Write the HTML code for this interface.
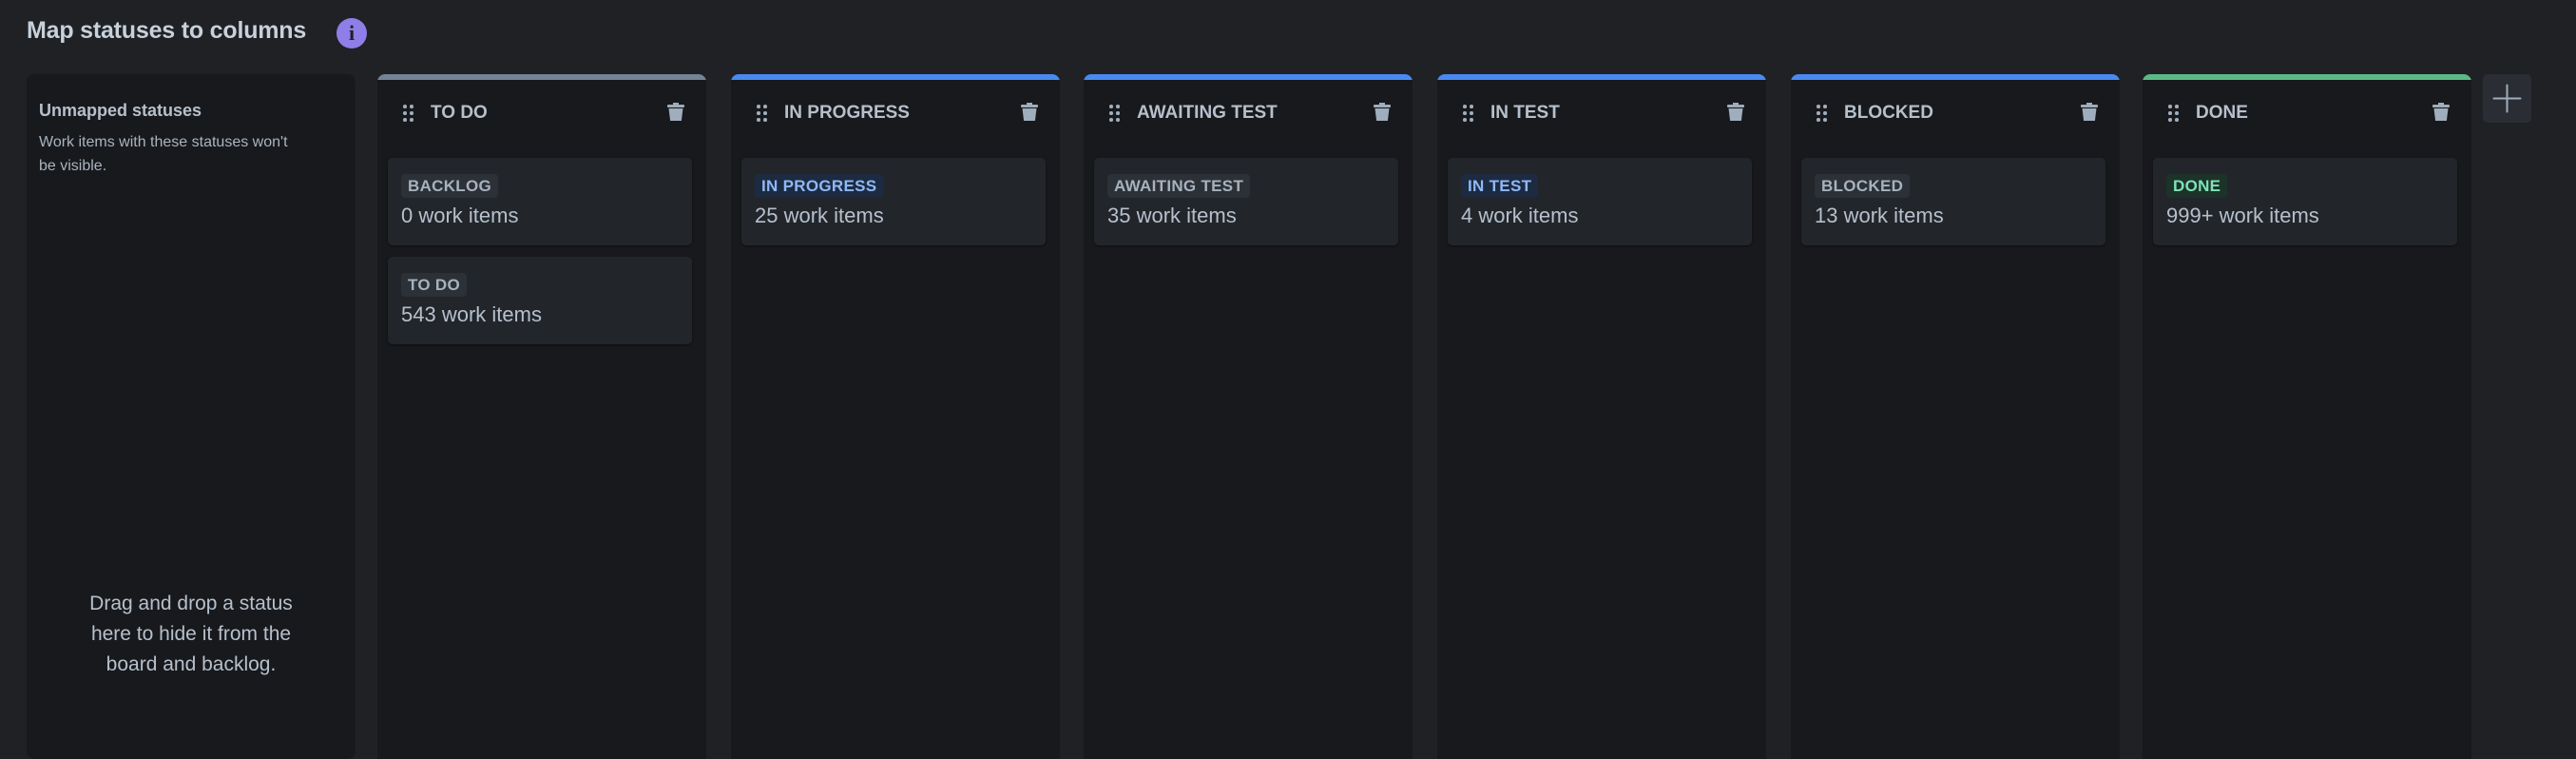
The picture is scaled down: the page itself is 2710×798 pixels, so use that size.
<!DOCTYPE html>
<html><head><meta charset="utf-8"><style>
*{box-sizing:border-box;margin:0;padding:0}
body{width:2710px;height:782px;background:#1f2125;font-family:"Liberation Sans",sans-serif;color:#b6c0cc;position:relative;overflow:hidden}
.title{position:absolute;left:28px;top:18px;font-size:25px;font-weight:bold;color:#c7d1db;letter-spacing:-0.2px}
.info{position:absolute;left:354px;top:19px;width:32px;height:32px;border-radius:50%;background:#8f7ee7;color:#1f2125;font-weight:bold;font-size:22px;text-align:center;line-height:32px;font-family:"Liberation Serif",serif}
.panel{position:absolute;left:28px;top:78px;width:346px;height:720px;background:#18191c;border-radius:8px}
.panel h3{position:absolute;left:13px;top:28px;font-size:18px;font-weight:bold;color:#b6c0cc}
.panel p.s{position:absolute;left:13px;top:59px;width:335px;font-size:16px;line-height:25px;color:#a9b4c0}
.panel p.d{position:absolute;left:0;width:346px;top:541px;text-align:center;font-size:21px;line-height:32px;color:#b6c0cc;padding:0 50px}
.col{position:absolute;top:78px;width:346px;height:720px;background:#18191c;border-radius:8px 8px 0 0;overflow:hidden}
.bar{position:absolute;left:0;top:0;width:100%;height:6px}
.hd{position:absolute;left:0;top:28px;width:100%;height:24px}
.grip{position:absolute;left:27px;top:4px;width:12px;height:18px}
.grip i{position:absolute;width:3.5px;height:3.5px;border-radius:50%;background:#9fadbc}
.hd b{position:absolute;left:56px;top:2px;font-size:19px;color:#b6c0cc}
.trash{position:absolute;left:305px;top:2px}
.card{position:absolute;left:11px;width:320px;height:92px;background:#22262b;border-radius:5px;box-shadow:0 1px 2px rgba(0,0,0,.5)}
.loz{position:absolute;left:14px;top:17px;height:25px;padding:0 7px;border-radius:4px;font-size:17px;font-weight:bold;line-height:25px;background:#2c3138;color:#a7b2be;letter-spacing:.3px}
.cnt{position:absolute;left:14px;top:48px;font-size:22px;color:#b6c0cc}
.blue{background:#1c2b41;color:#8fb8f6}
.green{background:#1c3329;color:#7ee2b8}
.plus{position:absolute;left:2612px;top:78px;width:51px;height:51px;background:#2a2e34;border-radius:5px}
</style></head><body>
<div class="title">Map statuses to columns</div>
<div class="info">i</div>
<div class="panel"><h3>Unmapped statuses</h3><p class="s">Work items with these statuses won't<br>be visible.</p><p class="d">Drag and drop a status here to hide it from the board and backlog.</p></div>

<div class="col" style="left:397px"><div class="bar" style="background:#738496"></div>
<div class="hd"><div class="grip"><i style="left:0;top:0"></i><i style="left:7px;top:0"></i><i style="left:0;top:7px"></i><i style="left:7px;top:7px"></i><i style="left:0;top:14px"></i><i style="left:7px;top:14px"></i></div><b>TO DO</b><svg class="trash" width="18" height="20" viewBox="0 0 18 20"><rect x="0" y="2" width="18" height="3" rx="1" fill="#9fadbc"/><rect x="6" y="0" width="6" height="3" fill="#9fadbc"/><path d="M1.5 6h15l-1.6 13H3.1z" fill="#9fadbc"/></svg></div>
<div class="card" style="top:88px"><span class="loz">BACKLOG</span><span class="cnt">0 work items</span></div>
<div class="card" style="top:192px"><span class="loz">TO DO</span><span class="cnt">543 work items</span></div></div>

<div class="col" style="left:769px"><div class="bar" style="background:#4a8af0"></div>
<div class="hd"><div class="grip"><i style="left:0;top:0"></i><i style="left:7px;top:0"></i><i style="left:0;top:7px"></i><i style="left:7px;top:7px"></i><i style="left:0;top:14px"></i><i style="left:7px;top:14px"></i></div><b>IN PROGRESS</b><svg class="trash" width="18" height="20" viewBox="0 0 18 20"><rect x="0" y="2" width="18" height="3" rx="1" fill="#9fadbc"/><rect x="6" y="0" width="6" height="3" fill="#9fadbc"/><path d="M1.5 6h15l-1.6 13H3.1z" fill="#9fadbc"/></svg></div>
<div class="card" style="top:88px"><span class="loz blue">IN PROGRESS</span><span class="cnt">25 work items</span></div></div>

<div class="col" style="left:1140px"><div class="bar" style="background:#4a8af0"></div>
<div class="hd"><div class="grip"><i style="left:0;top:0"></i><i style="left:7px;top:0"></i><i style="left:0;top:7px"></i><i style="left:7px;top:7px"></i><i style="left:0;top:14px"></i><i style="left:7px;top:14px"></i></div><b>AWAITING TEST</b><svg class="trash" width="18" height="20" viewBox="0 0 18 20"><rect x="0" y="2" width="18" height="3" rx="1" fill="#9fadbc"/><rect x="6" y="0" width="6" height="3" fill="#9fadbc"/><path d="M1.5 6h15l-1.6 13H3.1z" fill="#9fadbc"/></svg></div>
<div class="card" style="top:88px"><span class="loz">AWAITING TEST</span><span class="cnt">35 work items</span></div></div>

<div class="col" style="left:1512px"><div class="bar" style="background:#4a8af0"></div>
<div class="hd"><div class="grip"><i style="left:0;top:0"></i><i style="left:7px;top:0"></i><i style="left:0;top:7px"></i><i style="left:7px;top:7px"></i><i style="left:0;top:14px"></i><i style="left:7px;top:14px"></i></div><b>IN TEST</b><svg class="trash" width="18" height="20" viewBox="0 0 18 20"><rect x="0" y="2" width="18" height="3" rx="1" fill="#9fadbc"/><rect x="6" y="0" width="6" height="3" fill="#9fadbc"/><path d="M1.5 6h15l-1.6 13H3.1z" fill="#9fadbc"/></svg></div>
<div class="card" style="top:88px"><span class="loz blue">IN TEST</span><span class="cnt">4 work items</span></div></div>

<div class="col" style="left:1884px"><div class="bar" style="background:#4a8af0"></div>
<div class="hd"><div class="grip"><i style="left:0;top:0"></i><i style="left:7px;top:0"></i><i style="left:0;top:7px"></i><i style="left:7px;top:7px"></i><i style="left:0;top:14px"></i><i style="left:7px;top:14px"></i></div><b>BLOCKED</b><svg class="trash" width="18" height="20" viewBox="0 0 18 20"><rect x="0" y="2" width="18" height="3" rx="1" fill="#9fadbc"/><rect x="6" y="0" width="6" height="3" fill="#9fadbc"/><path d="M1.5 6h15l-1.6 13H3.1z" fill="#9fadbc"/></svg></div>
<div class="card" style="top:88px"><span class="loz">BLOCKED</span><span class="cnt">13 work items</span></div></div>

<div class="col" style="left:2254px"><div class="bar" style="background:#5cb887"></div>
<div class="hd"><div class="grip"><i style="left:0;top:0"></i><i style="left:7px;top:0"></i><i style="left:0;top:7px"></i><i style="left:7px;top:7px"></i><i style="left:0;top:14px"></i><i style="left:7px;top:14px"></i></div><b>DONE</b><svg class="trash" width="18" height="20" viewBox="0 0 18 20"><rect x="0" y="2" width="18" height="3" rx="1" fill="#9fadbc"/><rect x="6" y="0" width="6" height="3" fill="#9fadbc"/><path d="M1.5 6h15l-1.6 13H3.1z" fill="#9fadbc"/></svg></div>
<div class="card" style="top:88px"><span class="loz green">DONE</span><span class="cnt">999+ work items</span></div></div>

<div class="plus"><svg width="51" height="51" viewBox="0 0 51 51"><path d="M25.5 11.5v28M11.5 25.5h28" stroke="#9fadbc" stroke-width="2" stroke-linecap="round"/></svg></div>
</body></html>
